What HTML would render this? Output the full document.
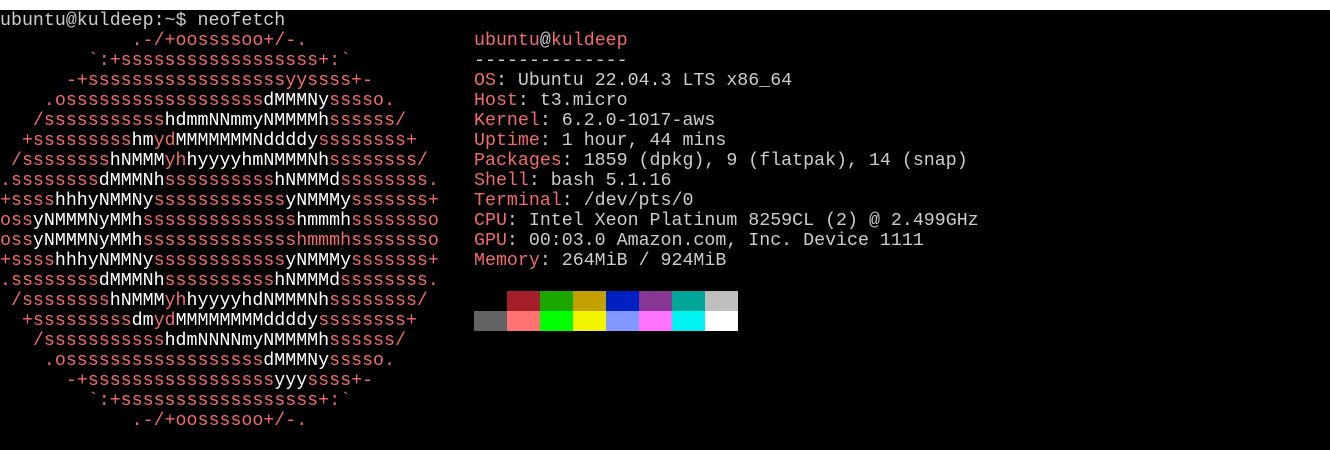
<html><head><style>
body{margin:0;width:1330px;height:450px;background:#000;overflow:hidden;position:relative}
.top{position:absolute;left:0;top:0;width:1330px;height:10px;background:#fff}
pre{position:absolute;margin:0;font-family:"Liberation Mono","DejaVu Sans Mono",monospace;font-size:18.3px;line-height:20px;color:#cccccc}
.r{color:#f26b6b}.w{color:#fff}
.sw{position:absolute;width:33px;height:20px}
</style></head><body>
<div class="top"></div>
<pre style="left:0;top:11px">ubuntu@kuldeep:~$ neofetch
<span class="r">            .-/+oossssoo+/-.
        `:+ssssssssssssssssss+:`
      -+ssssssssssssssssssyyssss+-
    .ossssssssssssssssss<span class="w">dMMMNy</span>sssso.
   /sssssssssss<span class="w">hdmmNNmmyNMMMMh</span>ssssss/
  +sssssssss<span class="w">hm</span>yd<span class="w">MMMMMMMNddddy</span>ssssssss+
 /ssssssss<span class="w">hNMMM</span>yh<span class="w">hyyyyhmNMMMNh</span>ssssssss/
.ssssssss<span class="w">dMMMNh</span>ssssssssss<span class="w">hNMMMd</span>ssssssss.
+ssss<span class="w">hhhyNMMNy</span>ssssssssssss<span class="w">yNMMMy</span>sssssss+
oss<span class="w">yNMMMNyMMh</span>ssssssssssssss<span class="w">hmmmh</span>ssssssso
oss<span class="w">yNMMMNyMMh</span>sssssssssssssshmmmhssssssso
+ssss<span class="w">hhhyNMMNy</span>ssssssssssss<span class="w">yNMMMy</span>sssssss+
.ssssssss<span class="w">dMMMNh</span>ssssssssss<span class="w">hNMMMd</span>ssssssss.
 /ssssssss<span class="w">hNMMM</span>yh<span class="w">hyyyyhdNMMMNh</span>ssssssss/
  +sssssssss<span class="w">dm</span>yd<span class="w">MMMMMMMMddddy</span>ssssssss+
   /sssssssssss<span class="w">hdmNNNNmyNMMMMh</span>ssssss/
    .ossssssssssssssssss<span class="w">dMMMNy</span>sssso.
      -+sssssssssssssssss<span class="w">yyy</span>ssss+-
        `:+ssssssssssssssssss+:`
            .-/+oossssoo+/-.</span></pre>
<pre style="left:474px;top:31px"><span class="r">ubuntu</span>@<span class="r">kuldeep</span>
--------------
<span class="r">OS</span>: Ubuntu 22.04.3 LTS x86_64
<span class="r">Host</span>: t3.micro
<span class="r">Kernel</span>: 6.2.0-1017-aws
<span class="r">Uptime</span>: 1 hour, 44 mins
<span class="r">Packages</span>: 1859 (dpkg), 9 (flatpak), 14 (snap)
<span class="r">Shell</span>: bash 5.1.16
<span class="r">Terminal</span>: /dev/pts/0
<span class="r">CPU</span>: Intel Xeon Platinum 8259CL (2) @ 2.499GHz
<span class="r">GPU</span>: 00:03.0 Amazon.com, Inc. Device 1111
<span class="r">Memory</span>: 264MiB / 924MiB</pre>
<div class="sw" style="left:507px;top:291px;background:#a51f2b"></div>
<div class="sw" style="left:540px;top:291px;background:#1ca600"></div>
<div class="sw" style="left:573px;top:291px;background:#c2a000"></div>
<div class="sw" style="left:606px;top:291px;background:#0021c2"></div>
<div class="sw" style="left:639px;top:291px;background:#863794"></div>
<div class="sw" style="left:672px;top:291px;background:#00a698"></div>
<div class="sw" style="left:705px;top:291px;background:#bebebe"></div>
<div class="sw" style="left:474px;top:311px;background:#636363"></div>
<div class="sw" style="left:507px;top:311px;background:#ff7373"></div>
<div class="sw" style="left:540px;top:311px;background:#00ff00"></div>
<div class="sw" style="left:573px;top:311px;background:#f4f400"></div>
<div class="sw" style="left:606px;top:311px;background:#8098ff"></div>
<div class="sw" style="left:639px;top:311px;background:#ff73ff"></div>
<div class="sw" style="left:672px;top:311px;background:#00f2f2"></div>
<div class="sw" style="left:705px;top:311px;background:#ffffff"></div>
</body></html>
